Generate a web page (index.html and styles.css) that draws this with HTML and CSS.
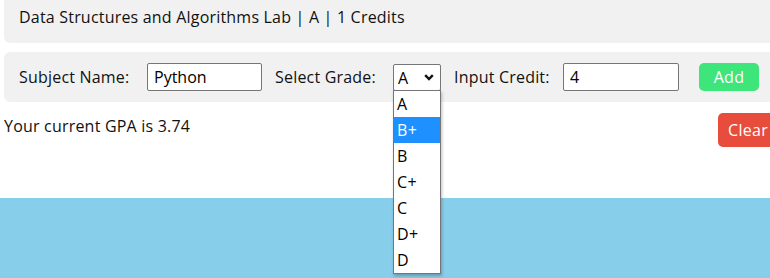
FILE: index.html
```html
<!DOCTYPE html>
<html lang="en">
<head>
    <meta charset="UTF-8">
    <meta name="viewport" content="width=device-width, initial-scale=1.0">
    <title>GPA Calculator</title>
    <link rel="stylesheet" href="styles.css">
</head>
<body>
    <div class="page">
        <div class="course-list">
            <div class="course-item">Data Structures and Algorithms Lab | A | 1 Credits</div>
        </div>

        <div class="course-form">
            <label for="subject" class="lbl-subject">Subject Name:</label>
            <input type="text" id="subject" class="text-input" value="Python">
            <label for="grade" class="lbl-grade">Select Grade:</label>
            <div class="select-wrap">
                <select id="grade" class="grade-select">
                    <option>A</option>
                    <option>B+</option>
                    <option>B</option>
                    <option>C+</option>
                    <option>C</option>
                    <option>D+</option>
                    <option>D</option>
                </select>
                <svg class="chevron" width="10" height="7" viewBox="0 0 10 7">
                    <path d="M1.2 1.2 L5 5 L8.8 1.2" fill="none" stroke="#111" stroke-width="2.4"/>
                </svg>
                <ul class="grade-menu">
                    <li>A</li>
                    <li class="active">B+</li>
                    <li>B</li>
                    <li>C+</li>
                    <li>C</li>
                    <li>D+</li>
                    <li>D</li>
                </ul>
            </div>
            <label for="credit" class="lbl-credit">Input Credit:</label>
            <input type="text" id="credit" class="text-input credit-input" value="4">
            <button class="btn btn-add">Add</button>
        </div>

        <div class="result">
            <p class="gpa">Your current GPA is <span id="gpa">3.74</span></p>
            <button class="btn btn-clear">Clear</button>
        </div>
    </div>
    <div class="footer"></div>
</body>
</html>
```

FILE: styles.css
```css
html, body {
    margin: 0;
    overflow: hidden;
}
body {
    font-family: "Open Sans", Arial, sans-serif;
    color: #111;
    background: #fff;
    height: 278px;
    display: flex;
    flex-direction: column;
}
.page {
    width: 796px;
    padding: 0 4px;
}
.course-item {
    background: #f1f1f1;
    height: 43px;
    box-sizing: border-box;
    padding: 6px 15px 0;
    font-size: 16px;
    letter-spacing: 0.2px;
    border-radius: 0 0 6px 6px;
    margin-bottom: 9px;
}
.course-form {
    background: #f1f1f1;
    border-radius: 6px;
    height: 50px;
    padding: 0 15px;
    display: flex;
    align-items: center;
    font-size: 16px;
    letter-spacing: 0.2px;
}
.course-form label {
    margin-right: 13px;
    white-space: nowrap;
}
.lbl-subject { width: 115px; }
.lbl-grade { width: 105px; }
.lbl-credit { width: 97px; margin-right: 12px !important; }
.text-input {
    box-sizing: border-box;
    width: 115px;
    height: 28px;
    border: 1px solid #767676;
    border-radius: 2px;
    padding: 0 6px;
    font-family: "Open Sans", Arial, sans-serif;
    font-size: 16px;
    color: #000;
    margin-right: 13px;
}
.credit-input {
    width: 116px;
    margin-right: 20px;
}
.select-wrap {
    position: relative;
    margin-right: 13px;
}
.grade-select {
    appearance: none;
    -webkit-appearance: none;
    box-sizing: border-box;
    width: 48px;
    height: 27px;
    margin-top: 1px;
    border: 1px solid #767676;
    border-radius: 2px;
    background: #fff;
    padding: 0 4px;
    font-family: "Open Sans", Arial, sans-serif;
    font-size: 16px;
    color: #000;
    display: block;
}
.chevron {
    position: absolute;
    right: 7px;
    top: 11px;
    pointer-events: none;
}
.grade-menu {
    position: absolute;
    top: 27px;
    left: 0;
    width: 48px;
    box-sizing: border-box;
    margin: 0;
    padding: 0;
    list-style: none;
    background: #fff;
    border: 1px solid #767676;
    box-shadow: 1px 2px 3px rgba(0, 0, 0, 0.25);
    z-index: 5;
}
.grade-menu li {
    height: 26px;
    line-height: 26px;
    padding-left: 3px;
    font-size: 16px;
    letter-spacing: 0.4px;
    color: #000;
}
.grade-menu li.active {
    background: #1e90ff;
    color: #fff;
}
.btn {
    border: none;
    color: #fff;
    font-family: "Open Sans", Arial, sans-serif;
    font-size: 16px;
    letter-spacing: 0.3px;
    border-radius: 5px;
    cursor: pointer;
}
.btn-add {
    background: #3de57a;
    width: 60px;
    height: 28px;
}
.result {
    display: flex;
    justify-content: space-between;
    align-items: flex-start;
    margin-top: 11px;
}
.gpa {
    margin: 2px 0 0;
    font-size: 16px;
    letter-spacing: 0.2px;
}
.btn-clear {
    background: #e74c3c;
    width: 82px;
    height: 34px;
    text-align: left;
    padding-left: 10px;
}
.footer {
    margin-top: 51px;
    flex: 1;
    background: #87ceeb;
}
```
